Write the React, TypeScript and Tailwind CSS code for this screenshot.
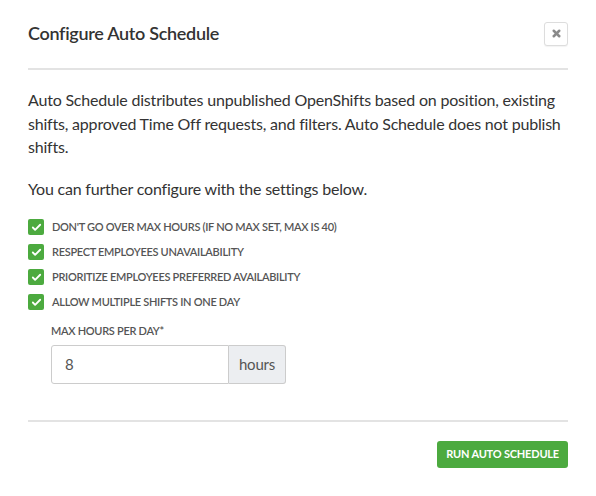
import { Check, X } from 'lucide-react'

const options = [
  "Don't go over max hours (if no max set, max is 40)",
  'Respect employees unavailability',
  'Prioritize employees preferred availability',
  'Allow multiple shifts in one day',
]

export default function App() {
  return (
    <div className="h-[496px] w-[596px] bg-white px-7 text-[#333] [font-family:Lato,'Liberation_Sans',sans-serif]">
      {/* header */}
      <div className="flex h-[70px] items-center justify-between border-b-2 border-[#e3e3e3] pb-[2px]">
        <h1 className="text-[18px] font-semibold tracking-[-0.3px]">Configure Auto Schedule</h1>
        <button className="mt-[1px] flex h-[24px] w-[24px] items-center justify-center rounded-[3px] border border-[#ddd] bg-white shadow-[0_1px_1px_rgba(0,0,0,0.05)]">
          <X size={11} strokeWidth={5.5} className="text-[#8a8a8a]" />
        </button>
      </div>

      {/* body */}
      <div className="border-b-2 border-[#e3e3e3] pb-[36px] pt-[18px]">
        <p className="text-[16px] leading-[23.5px] tracking-[-0.2px]">
          Auto Schedule distributes unpublished OpenShifts based on position, existing shifts, approved Time Off requests,
          and filters. Auto Schedule does not publish shifts.
        </p>
        <p className="mt-[18px] text-[16px] leading-[23.5px] tracking-[-0.2px]">
          You can further configure with the settings below.
        </p>

        <ul className="mt-[18px] flex flex-col gap-[7px]">
          {options.map((o) => (
            <li key={o} className="flex h-[18px] items-center gap-[8px]">
              <span className="flex h-[16px] w-[16px] items-center justify-center rounded-[2px] bg-[#4caa3f]">
                <Check size={11} strokeWidth={4} className="text-white" />
              </span>
              <span className="text-[11px] font-semibold uppercase tracking-[-0.3px] text-[#555]">{o}</span>
            </li>
          ))}
        </ul>

        <div className="ml-[23px] mt-[11px]">
          <label className="block h-[18px] text-[11px] font-semibold uppercase leading-[18px] tracking-[-0.3px] text-[#555]">
            Max hours per day*
          </label>
          <div className="mt-[5px] flex h-[39px] w-[235px]">
            <input
              defaultValue="8"
              className="w-[178px] rounded-l-[3px] border border-[#ccc] px-[13px] text-[15px] text-[#555] outline-none"
            />
            <span className="flex flex-1 items-center justify-center rounded-r-[3px] border border-l-0 border-[#ccc] bg-[#eceef1] text-[15px] tracking-[-0.2px] text-[#555]">
              hours
            </span>
          </div>
        </div>
      </div>

      {/* footer */}
      <div className="flex justify-end pt-[19px]">
        <button className="h-[27px] rounded-[3px] bg-[#4caa3f] px-[9px] text-[11px] font-bold uppercase tracking-[-0.2px] text-white">
          Run auto schedule
        </button>
      </div>
    </div>
  )
}
